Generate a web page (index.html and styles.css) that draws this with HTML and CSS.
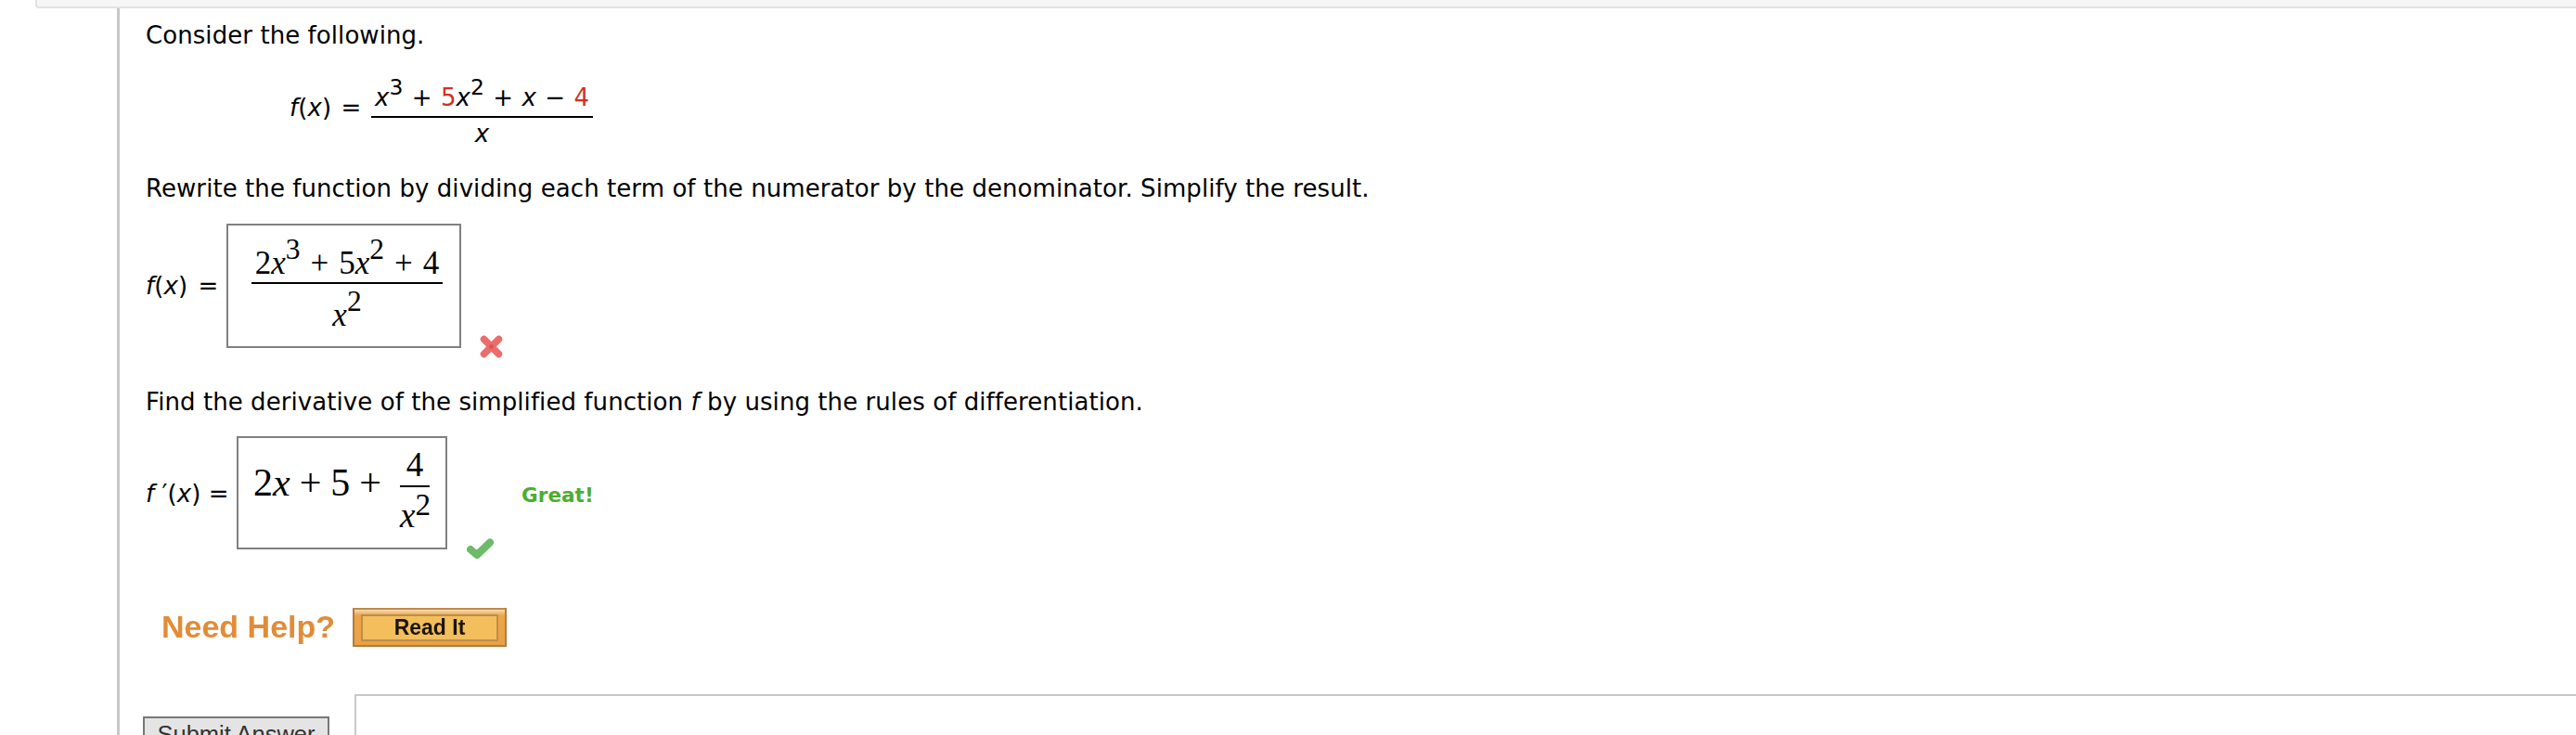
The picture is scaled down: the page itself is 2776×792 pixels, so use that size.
FILE: index.html
```html
<!DOCTYPE html>
<html lang="en">
<head>
<meta charset="utf-8">
<title>Question</title>
<link rel="stylesheet" href="styles.css">
</head>
<body>
<div class="topbar"></div>
<main class="question">
  <p class="line first">Consider the following.</p>
  <div class="eq-row">
    <span class="eq-label"><i>f</i>(<i>x</i>) =</span>
    <div class="frac given">
      <div class="num"><i>x</i><sup>3</sup> + <span class="red">5</span><i>x</i><sup>2</sup> + <i>x</i> − <span class="red">4</span></div>
      <div class="bar"></div>
      <div class="den"><i>x</i></div>
    </div>
  </div>
  <p class="line second">Rewrite the function by dividing each term of the numerator by the denominator. Simplify the result.</p>
  <div class="answer-row a1">
    <span class="a-label"><i>f</i>(<i>x</i>) =</span>
    <div class="box box1">
      <div class="tex frac f1">
        <div class="num">2<i>x</i><sup>3</sup><span class="op">+</span>5<i>x</i><sup>2</sup><span class="op">+</span>4</div>
        <div class="bar"></div>
        <div class="den"><i>x</i><sup>2</sup></div>
      </div>
    </div>
    <svg class="icon cross" viewBox="0 0 25 27" aria-label="Incorrect"><path d="M4.500 5.500 20.500 21.500M20.500 5.500 4.500 21.500" stroke="#ec6c6c" stroke-width="7.500" stroke-linecap="round" fill="none"/><rect x="10.500" y="11.500" width="4" height="4" fill="#dd5050"/></svg>
  </div>
  <p class="line third">Find the derivative of the simplified function <i>f</i> by using the rules of differentiation.</p>
  <div class="answer-row a2">
    <span class="a-label"><i>f</i> ′(<i>x</i>) =</span>
    <div class="box box2">
      <div class="tex main">2<i>x</i><span class="op">+</span>5<span class="op end">+</span></div>
      <div class="tex frac f2">
        <div class="num">4</div>
        <div class="bar"></div>
        <div class="den"><i>x</i><sup>2</sup></div>
      </div>
    </div>
    <svg class="icon check" viewBox="0 0 30 24" aria-label="Correct"><path d="M5 13 12 19 26 5.500" stroke="#6dba68" stroke-width="8" stroke-linecap="round" stroke-linejoin="round" fill="none"/></svg>
    <span class="great">Great!</span>
  </div>
  <div class="help-row">
    <span class="need">Need Help?</span>
    <a class="read"><span class="read-inner">Read It</span></a>
  </div>
  <div class="submit-row">
    <button class="submit">Submit Answer</button>
    <div class="notes"></div>
  </div>
</main>
</body>
</html>
```
FILE: styles.css
```css
html, body { margin: 0; padding: 0; background: #fff; }
body { height: 792px; overflow: hidden; font-family: "DejaVu Sans", Verdana, sans-serif; color: #000; }

.topbar {
  margin-left: 38px; height: 9px; box-sizing: border-box;
  background: #f6f6f6; border: 2px solid #e2e2e2; border-top: 0; border-right: 0;
  border-bottom-left-radius: 4px;
}
.question {
  margin-left: 126px; border-left: 3px solid #c8c8c8; padding: 14px 0 0 28px;
  height: 783px; box-sizing: border-box; font-size: 26px; line-height: 30px; letter-spacing: 0.07px;
}
.line { margin: 0; white-space: nowrap; }
.second { margin-top: 29px; }
.third { margin-top: 43px; }
sup { font-size: 0.9em; line-height: 0; vertical-align: 0.5em; }
.red { color: #d13020; }

.eq-row { display: flex; margin: 37px 0 0 155px; align-items: flex-start; height: 69px; }
.eq-label { margin-top: 11px; width: 88px; white-space: nowrap; word-spacing: 2px; }
.frac { display: flex; flex-direction: column; align-items: stretch; text-align: center; white-space: nowrap; }
.bar { height: 2px; background: #000; }
.given { width: 239px; }
.given .num { padding-bottom: 5px; word-spacing: 1px; }
.given .den { margin-top: 2px; }

.answer-row { display: flex; align-items: flex-start; }
.a1 { margin-top: 23px; height: 134px; }
.a2 { margin-top: 22px; height: 122px; }
.a-label { white-space: nowrap; }
.a1 .a-label { margin-top: 52px; width: 87px; word-spacing: 3px; }
.a2 .a-label { margin-top: 47px; width: 98px; }
.box { box-sizing: border-box; border: 2px solid #808080; display: flex; align-items: flex-start; letter-spacing: 0; }
.box1 { width: 253px; height: 134px; padding: 21px 0 0 25px; }
.box2 { width: 227px; height: 122px; padding: 9px 0 0 16px; }
.tex { font-family: "Liberation Serif", "Times New Roman", serif; }
.f1 { width: 206px; font-size: 35px; line-height: 40px; }
.f1 .den { margin-top: 14px; }
.f1 .op { margin: 0 11px; }
.main { font-size: 42px; line-height: 46px; margin-top: 16px; white-space: nowrap; }
.main .op { margin: 0 10px; }
.main .op.end { margin-right: 0; }
.f2 { width: 32px; margin-left: 20px; font-size: 37px; line-height: 40px; }
.f2 .num { padding-bottom: 2px; }
.f2 .den { margin-top: 11px; }
.f2 .den sup { vertical-align: 0.38em; }

.icon { display: block; filter: blur(0.6px); flex: none; }
.cross { width: 25px; height: 27px; margin: 119px 0 0 20px; }
.check { width: 30px; height: 24px; margin: 109px 0 0 20px; }
.great { margin: 49px 0 0 30px; color: #4cae2e; font-weight: 700; font-size: 21.500px; }

.help-row { display: flex; align-items: flex-start; margin: 63px 0 0 17px; height: 42px; letter-spacing: 0; }
.need {
  width: 206px; margin-top: 2px; font-family: "Liberation Sans", Arial, sans-serif; font-size: 34px; line-height: 36px;
  font-weight: 700; color: #e28c38; white-space: nowrap; filter: blur(0.5px);
}
.read {
  box-sizing: border-box; width: 166px; height: 42px; padding: 5px 7px 4px 7px; display: block;
  border: 2px solid #b07c3c; border-top-color: #c08a48;
  background: linear-gradient(#f8dcb4 0, #eda548 6px, #eba046 100%);
}
.read-inner {
  display: block; height: 29px; box-sizing: border-box; border: 2px solid #bb8f4c; background: #f3be5c;
  text-align: center; font: 700 23px/25px "Liberation Sans", Arial, sans-serif; color: #1a1508; filter: blur(0.4px);
}

.submit-row { display: flex; align-items: flex-start; margin: 51px 0 0 -3px; letter-spacing: 0; }
.submit {
  flex: none; box-sizing: border-box; width: 201px; height: 36px; margin-top: 24px; padding: 2px 0 0;
  border: 2px solid #777; background: #e4e4e4; color: #333; border-radius: 0;
  font: 25.500px/30px "Liberation Sans", Arial, sans-serif; display: block; text-align: center;
}
.notes { flex: 1; height: 120px; margin-left: 27px; box-sizing: border-box; border: 2px solid #c8c8c8; border-right: 0; }
```
